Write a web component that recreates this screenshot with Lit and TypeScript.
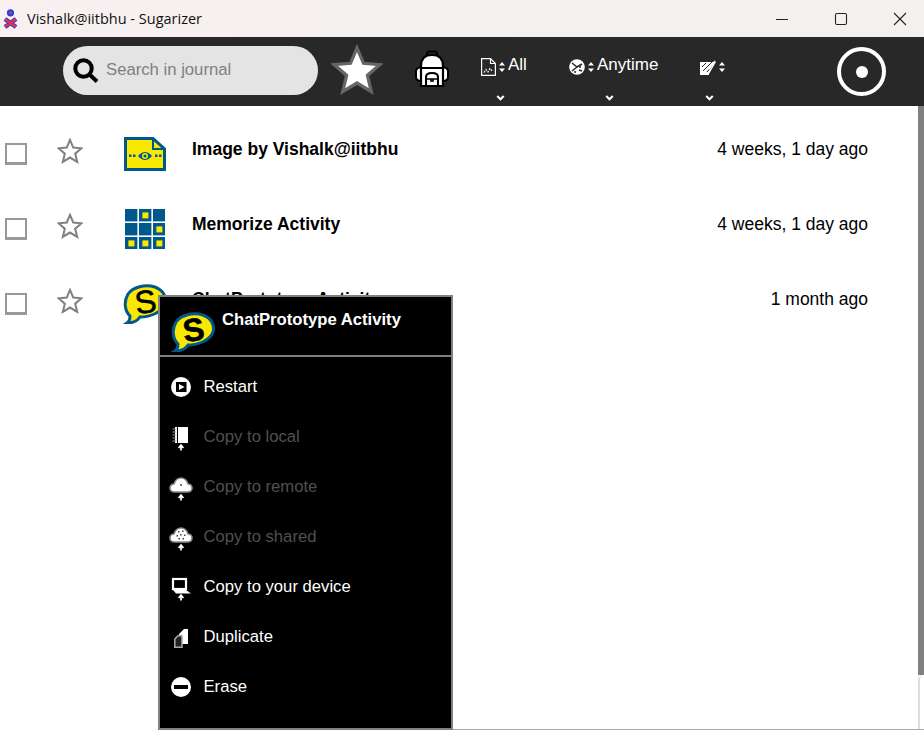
import { css, html, LitElement, svg } from 'lit';
import { customElement } from 'lit/decorators.js';

const BLUE = '#00588c';
const YELLOW = '#f9e800';

const logo = html`<svg class="logo" viewBox="0 0 15 20" width="15" height="20">
    <circle cx="7.5" cy="3.8" r="2.6" fill="#e8303a" stroke="#1746f0" stroke-width="2" />
    <path d="M2 10 L13 18 M13 10 L2 18" stroke="#1746f0" stroke-width="4.6" />
    <path d="M2 10 L13 18 M13 10 L2 18" stroke="#ee2f36" stroke-width="2.4" />
</svg>`;

const chatIcon = (size: number) => html`<svg viewBox="0 0 44 40" width=${size} height=${(size * 40) / 44}>
    <path
        d="M7 32 C1 26 1 17 5 10 C10 3 22 0 32 3 C40 6 44 13 42 20 C39 28 28 33 17 33 C15 36 11 39 4 39 C7 37 7 35 7 32 Z"
        fill=${YELLOW}
        stroke=${BLUE}
        stroke-width="3"
    />
    <text
        x="22.5"
        y="29"
        transform="rotate(-8 22 18)"
        text-anchor="middle"
        font-family="Liberation Sans, sans-serif"
        font-size="32"
        fill="#000"
        stroke="#000"
        stroke-width=".6"
    >S</text>
</svg>`;

const imageIcon = html`<svg viewBox="0 0 42 34" width="42" height="34">
    <path d="M1.5 1.5 H29 L40.5 12 V32.5 H1.5 Z" fill=${YELLOW} stroke=${BLUE} stroke-width="3" />
    <path d="M29 1.5 V12 H40.5" fill="none" stroke=${BLUE} stroke-width="2" />
    <path d="M14 19 Q21 11 28 19 Q21 27 14 19 Z" fill=${BLUE} />
    <circle cx="21" cy="19" r="3" fill=${YELLOW} />
    <circle cx="21" cy="19" r="1.5" fill=${BLUE} />
    <path d="M5 17.5 h2.5 v2.5 h-2.5 z M9 17.5 h2.5 v2.5 h-2.5 z M31 17.5 h2.5 v2.5 h-2.5 z M35 17.5 h2.5 v2.5 h-2.5 z" fill=${BLUE} />
</svg>`;

const memorizeCells: [number, number, boolean][] = [
    [0, 0, false], [14, 0, true], [28, 0, false],
    [0, 14, false], [14, 14, false], [28, 14, true],
    [0, 28, true], [14, 28, true], [28, 28, true],
];

const memorizeIcon = html`<svg viewBox="0 0 40 40" width="40" height="40">
    ${memorizeCells.map(
        ([x, y, on]) => svg`
            <rect x=${x} y=${y} width="12.4" height="12.4" fill=${BLUE} />
            ${on ? svg`<rect x=${x + 3.4} y=${y + 3.4} width="6" height="6" fill=${YELLOW} />` : ''}
        `,
    )}
</svg>`;

const starPath = 'M12 1.8 L15 8.9 L22.6 9.5 L16.8 14.5 L18.6 22 L12 18 L5.4 22 L7.2 14.5 L1.4 9.5 L9 8.9 Z';

const outlineStar = html`<svg viewBox="0 0 24 24" width="26" height="26">
    <path d=${starPath} fill="#fff" stroke="#808080" stroke-width="1.9" />
</svg>`;

const bigStar = html`<svg viewBox="0 0 24 24" width="52" height="52">
    <path d=${starPath} fill="#fff" stroke="#666" stroke-width="1.5" />
</svg>`;

const spinner = html`<svg viewBox="0 0 6 12" width="6" height="12">
    <path d="M0 4.5 L3 1 L6 4.5 Z M0 7.5 L3 11 L6 7.5 Z" fill="#fff" />
</svg>`;

const chevron = html`<svg class="chev" viewBox="0 0 10 7" width="9" height="6">
    <path d="M1.2 1.2 L5 5 L8.8 1.2" fill="none" stroke="#fff" stroke-width="2.4" />
</svg>`;

const docIcon = html`<svg viewBox="0 0 15 18" width="15" height="18">
    <path d="M.6 .6 H9.5 L14.4 5.5 V17.4 H.6 Z M9.5 .6 V5.5 H14.4" fill="none" stroke="#fff" stroke-width="1.2" />
    <path d="M3 14.5 L5 11.5 L7 14 L9 10.5 L11.5 13.5" fill="none" stroke="#fff" stroke-width="1.1" stroke-dasharray="2 1" />
</svg>`;

const clockIcon = html`<svg viewBox="0 0 16 16" width="16" height="16">
    <circle cx="8" cy="8" r="7.8" fill="#fff" />
    <path d="M8 8 L3 4 M8 8 L3 12 M8 8 L13 5 M10 11 L13 12" stroke="#282828" stroke-width="1.6" />
    <circle cx="11" cy="8" r="1" fill="#282828" />
    <circle cx="6" cy="13" r="1" fill="#282828" />
</svg>`;

const sortIcon = html`<svg viewBox="0 0 16 15" width="16" height="15">
    <path d="M0 2 H16 L9 14 V15 H0 Z" fill="#fff" />
    <path d="M3 11 L12 2 M2 7 L6 3 M7 12 L12 6" stroke="#282828" stroke-width="1" />
    <path d="M9 9 L15 1" stroke="#fff" stroke-width="1.6" />
</svg>`;

const searchIcon = html`<svg viewBox="0 0 26 26" width="26" height="26">
    <circle cx="10.5" cy="10.5" r="8.2" fill="none" stroke="#000" stroke-width="4" />
    <path d="M16.5 16.5 L24 23.5" stroke="#000" stroke-width="4" />
</svg>`;

const backpack = html`<svg viewBox="0 0 36 38" width="36" height="38">
    <path d="M13 6 V4 Q13 1.5 15.5 1.5 H20.5 Q23 1.5 23 4 V6" fill="none" stroke="#000" stroke-width="2" />
    <path d="M7 31 Q2 31 2 27 V21 Q2 18 7 17 M29 31 Q34 31 34 27 V21 Q34 18 29 17" fill="#fff" stroke="#000" stroke-width="2" />
    <path d="M7 36 V16 Q7 5 18 5 Q29 5 29 16 V36 Z" fill="#fff" stroke="#000" stroke-width="2.2" />
    <path d="M7 18 H29" stroke="#000" stroke-width="2" />
    <path d="M12 36 V27 Q12 23 18 23 Q24 23 24 27 V36 Z" fill="#fff" stroke="#000" stroke-width="2" />
    <path d="M12 29 H24 M17 29 V31 H19 V29" fill="none" stroke="#000" stroke-width="1.6" />
</svg>`;

const upArrow = svg`<path d="M12 28.5 V24 M9.6 26 L12 23 L14.4 26" fill="none" stroke="#fff" stroke-width="1.7" />`;

const cloud = 'M6 20 Q1 20 1 16 Q1 12.5 5 12 Q7 6 12 6 Q17 6 19 12 Q23 12.5 23 16 Q23 20 18 20 Z';

const menuIcons = {
    restart: html`<svg viewBox="0 0 24 30" width="24" height="30">
        <circle cx="12" cy="15" r="10" fill="#fff" />
        <rect x="7" y="10" width="10.5" height="10" fill="#000" />
        <path d="M10 12 L15.5 15 L10 18 Z" fill="#fff" />
    </svg>`,
    local: html`<svg viewBox="0 0 24 30" width="24" height="30">
        <rect x="6" y="5" width="13" height="16" fill="#fff" />
        <path d="M3.5 7 H7.5 M3.5 10 H7.5 M3.5 13 H7.5 M3.5 16 H7.5 M3.5 19 H7.5" stroke="#999" stroke-width="1.2" />
        <path d="M8.5 5 V21" stroke="#000" stroke-width="1" />
        ${upArrow}
    </svg>`,
    remote: html`<svg viewBox="0 0 24 30" width="24" height="30">
        <path d=${cloud} fill="#fff" stroke="#888" stroke-width="1.6" />
        <circle cx="12" cy="13" r=".9" fill="#333" />
        ${upArrow}
    </svg>`,
    shared: html`<svg viewBox="0 0 24 30" width="24" height="30">
        <path d=${cloud} fill="#fff" stroke="#888" stroke-width="1.6" />
        <path d="M9 9 h1.5 v1.5 h-1.5 z M13 8.5 h1.5 v1.5 h-1.5 z M11 12 h1.5 v1.5 h-1.5 z M7.5 13 h1.5 v1.5 h-1.5 z M15 12.5 h1.5 v1.5 h-1.5 z M9.5 16 h1.5 v1.5 h-1.5 z M13.5 16 h1.5 v1.5 h-1.5 z" fill="#444" />
        ${upArrow}
    </svg>`,
    device: html`<svg viewBox="0 0 24 30" width="24" height="30">
        <rect x="4" y="7" width="13" height="10" fill="#000" stroke="#fff" stroke-width="2.2" />
        <path d="M4 18 H17 L22 21.5 H7 Z" fill="#fff" />
        ${upArrow}
    </svg>`,
    duplicate: html`<svg viewBox="0 0 24 30" width="24" height="30">
        <path d="M10 12 L15 7 H19 V22 H8 V16 H10 Z" fill="#fff" />
        <path d="M5.8 17 L9 13.8 H13 V25.2 H5.8 Z" fill="#222" stroke="#aaa" stroke-width="1.5" />
    </svg>`,
    erase: html`<svg viewBox="0 0 24 30" width="24" height="30">
        <circle cx="12" cy="15" r="10" fill="#fff" />
        <rect x="5" y="13" width="14" height="4" fill="#000" />
    </svg>`,
};

const entries = [
    { title: 'Image by Vishalk@iitbhu', time: '4 weeks, 1 day ago', icon: imageIcon },
    { title: 'Memorize Activity', time: '4 weeks, 1 day ago', icon: memorizeIcon },
    { title: 'ChatPrototype Activity', time: '1 month ago', icon: chatIcon(44) },
];

const actions = [
    { label: 'Restart', icon: menuIcons.restart },
    { label: 'Copy to local', icon: menuIcons.local, off: true },
    { label: 'Copy to remote', icon: menuIcons.remote, off: true },
    { label: 'Copy to shared', icon: menuIcons.shared, off: true },
    { label: 'Copy to your device', icon: menuIcons.device },
    { label: 'Duplicate', icon: menuIcons.duplicate },
    { label: 'Erase', icon: menuIcons.erase },
];

@customElement('app-root')
export class AppRoot extends LitElement {
    static override styles = css`
        :host {
            display: flex;
            flex-direction: column;
            position: relative;
            width: 924px;
            height: 730px;
            overflow: hidden;
            background: #fff;
            font-family: 'Liberation Sans', Arial, sans-serif;
        }
        svg {
            display: block;
            flex: none;
        }
        .titlebar {
            flex: none;
            height: 37px;
            display: flex;
            align-items: center;
            padding-left: 3px;
            background: linear-gradient(90deg, #f8f0f1, #f3f1ed 60%);
            font-family: 'Open Sans', sans-serif;
            font-size: 14.5px;
            color: #111;
        }
        .logo {
            margin-right: 9px;
        }
        .winbtns {
            margin-left: auto;
            display: flex;
            gap: 10px;
        }
        .winbtns span {
            width: 49px;
            display: flex;
            justify-content: center;
        }
        .toolbar {
            flex: none;
            height: 69px;
            display: flex;
            background: #282828;
            padding-left: 63px;
            box-sizing: border-box;
            color: #fff;
        }
        .search {
            width: 255px;
            height: 49px;
            margin: 9px 0 0;
            border-radius: 25px;
            background: #e4e4e4;
            display: flex;
            align-items: center;
            padding-left: 10px;
            box-sizing: border-box;
            gap: 7px;
            color: #808080;
            font-size: 16.7px;
        }
        .search span {
            margin-top: -1px;
        }
        .fav {
            margin: 7px 0 0 13px;
        }
        .bag {
            margin: 13px 0 0 31px;
        }
        .filter {
            display: flex;
            flex-direction: column;
            padding-top: 16px;
            box-sizing: border-box;
            font-size: 17px;
        }
        .filter .top {
            display: flex;
            gap: 3px;
            height: 28px;
            align-items: center;
        }
        .filter .label {
            margin: -5px 0 0 0;
        }
        .chev {
            margin-top: 14px;
        }
        .f1 {
            margin-left: 31px;
            width: 88px;
        }
        .f1 .chev {
            margin-left: 15px;
        }
        .f2 {
            margin-left: 0;
            width: 131px;
        }
        .f2 .chev {
            margin-left: 36px;
        }
        .f3 .chev {
            margin-left: 5px;
        }
        .target {
            margin: 10px 38px 0 auto;
            width: 49px;
            height: 49px;
            box-sizing: border-box;
            border: 4px solid #fff;
            border-radius: 50%;
            display: flex;
            align-items: center;
            justify-content: center;
        }
        .target i {
            width: 12px;
            height: 12px;
            border-radius: 50%;
            background: #fff;
        }
        .content {
            flex: 1;
            display: flex;
            min-height: 0;
        }
        .list {
            flex: 1;
            padding-top: 8px;
        }
        .row {
            height: 75px;
            display: flex;
            align-items: center;
            font-size: 17.5px;
            color: #000;
        }
        .check {
            width: 22px;
            height: 22px;
            box-sizing: border-box;
            margin: 4px 0 0 5px;
            border: 2px solid #999;
            border-bottom-width: 3px;
            background: #fff;
        }
        .star {
            margin: -2px 0 0 30px;
        }
        .icon {
            width: 44px;
            margin: 4px 0 0 40px;
            display: flex;
            justify-content: center;
        }
        .name {
            margin: -5px 0 0 25px;
            font-weight: 700;
        }
        .time {
            margin: -5px 50px 0 auto;
        }
        .scroll {
            flex: none;
            width: 6px;
            display: flex;
            flex-direction: column;
        }
        .thumb {
            height: 569px;
            background: #808080;
        }
        .rest {
            flex: 1;
            border-left: 2px solid #ddd;
            border-top-left-radius: 5px;
        }
        .bottom {
            position: absolute;
            left: 453px;
            right: 0;
            bottom: 0;
            height: 1px;
            background: #a9a9a4;
        }
        .menu {
            position: absolute;
            left: 158px;
            top: 295px;
            width: 295px;
            height: 435px;
            box-sizing: border-box;
            background: #000;
            border: 2px solid #808080;
            color: #fff;
            font-size: 16.67px;
        }
        .menu header {
            height: 60px;
            box-sizing: border-box;
            border-bottom: 2px solid #808080;
            display: flex;
            padding: 15px 0 0 11px;
            gap: 7px;
            font-weight: 700;
        }
        .menu header span {
            margin-top: -2px;
        }
        .menu ul {
            list-style: none;
            margin: 0;
            padding: 5px 0 0;
        }
        .menu li {
            height: 50px;
            display: flex;
            align-items: center;
            padding-left: 9px;
            gap: 10.5px;
        }
        .menu li span {
            margin-top: -1px;
        }
        .menu li.off {
            color: #505050;
        }
    `;

    override render() {
        return html`
            <div class="titlebar">
                ${logo}<span>Vishalk@iitbhu - Sugarizer</span>
                <div class="winbtns">
                    <span>
                        <svg viewBox="0 0 14 14" width="14" height="14"><path d="M1 7.5 H13" stroke="#222" /></svg>
                    </span>
                    <span>
                        <svg viewBox="0 0 14 14" width="14" height="14"><rect x="1.5" y="1.5" width="11" height="11" rx="1.5" fill="none" stroke="#222" stroke-width="1.1" /></svg>
                    </span>
                    <span>
                        <svg viewBox="0 0 14 14" width="14" height="14"><path d="M1 1 L13 13 M13 1 L1 13" stroke="#222" stroke-width="1.1" /></svg>
                    </span>
                </div>
            </div>
            <div class="toolbar">
                <div class="search">${searchIcon}<span>Search in journal</span></div>
                <div class="fav">${bigStar}</div>
                <div class="bag">${backpack}</div>
                <div class="filter f1">
                    <div class="top">${docIcon}${spinner}<span class="label">All</span></div>
                    ${chevron}
                </div>
                <div class="filter f2">
                    <div class="top">${clockIcon}${spinner}<span class="label">Anytime</span></div>
                    ${chevron}
                </div>
                <div class="filter f3">
                    <div class="top">${sortIcon}${spinner}</div>
                    ${chevron}
                </div>
                <div class="target"><i></i></div>
            </div>
            <div class="content">
                <div class="list">
                    ${entries.map(
                        (e) => html`
                            <div class="row">
                                <div class="check"></div>
                                <div class="star">${outlineStar}</div>
                                <div class="icon">${e.icon}</div>
                                <div class="name">${e.title}</div>
                                <div class="time">${e.time}</div>
                            </div>
                        `,
                    )}
                </div>
                <div class="scroll">
                    <div class="thumb"></div>
                    <div class="rest"></div>
                </div>
            </div>
            <div class="menu">
                <header>${chatIcon(44)}<span>ChatPrototype Activity</span></header>
                <ul>
                    ${actions.map(
                        (a) => html`<li class=${a.off ? 'off' : ''}>${a.icon}<span>${a.label}</span></li>`,
                    )}
                </ul>
            </div>
            <div class="bottom"></div>
        `;
    }
}
